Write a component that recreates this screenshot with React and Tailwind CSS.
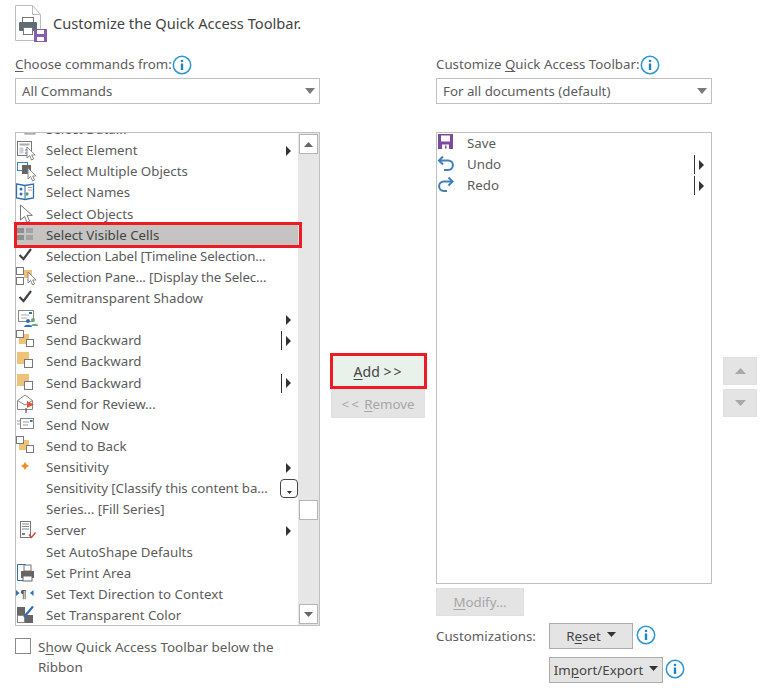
import React from "react";

const Tri = ({ dir = "down", color = "#7a7a7a", w = 10, h = 6 }) => (
  <svg width={w} height={h} viewBox="0 0 10 6" className="shrink-0" preserveAspectRatio="none">
    <path d={dir === "down" ? "M0 0H10L5 6Z" : "M0 6H10L5 0Z"} fill={color} />
  </svg>
);

const Info = ({ size = 20 }) => (
  <svg width={size} height={size} viewBox="0 0 20 20" className="shrink-0">
    <circle cx="10" cy="10" r="8.7" fill="none" stroke="#2b96d6" strokeWidth="1.5" />
    <circle cx="10" cy="6" r="1.3" fill="#1f86c6" />
    <rect x="8.8" y="8.5" width="2.4" height="6.5" fill="#1f86c6" />
  </svg>
);

const Cur = ({ x, y }) => (
  <path d={`M${x} ${y}v11l2.7-2.4 1.9 4.4 2-1-1.9-4h3.5z`} fill="#fff" stroke="#7d7d7d" strokeWidth="0.9" />
);

const Ico = ({ children }) => (
  <svg width="30" height="21" viewBox="0 0 30 21" className="shrink-0 overflow-visible">{children}</svg>
);

const Sq = ({ x, y, s = 7 }) => <rect x={x + 0.5} y={y + 0.5} width={s} height={s} fill="#fff" stroke="#777" />;

const icons = {
  data: (
    <Ico>
      <rect x="2" y="8" width="5" height="5" fill="#fff" stroke="#888" />
      <rect x="9" y="10" width="10" height="5" fill="#ddd" stroke="#888" />
    </Ico>
  ),
  element: (
    <Ico>
      <rect x="1.5" y="1.5" width="14" height="14" fill="#fff" stroke="#777" />
      <rect x="3.5" y="3.5" width="10" height="2" fill="#aaa" />
      <rect x="3.5" y="7.5" width="4" height="6" fill="#ccd" />
      <path d="M9 10h4M9 13h4" stroke="#2e75b6" />
      <Cur x={11} y={7} />
    </Ico>
  ),
  multi: (
    <Ico>
      <rect x="1.5" y="1.5" width="10" height="8" fill="#fff" stroke="#3b82c4" />
      <rect x="6" y="4" width="9" height="9" fill="#666" />
      <Cur x={12} y={7} />
    </Ico>
  ),
  names: (
    <Ico>
      <path d="M0.500 2l8.500 1.500 8.500-1.500v14l-8.500 1.500-8.500-1.500z" fill="#fff" stroke="#2e6fb0" strokeWidth="1.300" />
      <path d="M9 3.500V17" stroke="#2e6fb0" />
      <circle cx="5" cy="7" r="1.500" fill="#2e6fb0" />
      <circle cx="5" cy="12" r="1.500" fill="#2e6fb0" />
      <circle cx="11" cy="12" r="1.700" fill="#5a9c6d" />
      <path d="M12 5.500h4M12 8h4" stroke="#c98" />
    </Ico>
  ),
  objects: (
    <Ico>
      <path d="M4.500 1v15l4-3.600 2.600 6 2.600-1.200-2.700-5.800h5.300z" fill="#fff" stroke="#777" />
    </Ico>
  ),
  visible: (
    <Ico>
      <path d="M1 3h7v5H1zM1 10h7v5H1z" fill="#8f8f8f" />
      <path d="M10 3h7v5h-7zM10 10h7v5h-7z" fill="#a3a3a3" />
    </Ico>
  ),
  check: (
    <Ico>
      <path d="M3.500 9l4 4 7.500-10" fill="none" stroke="#444" strokeWidth="2.200" />
    </Ico>
  ),
  pane: (
    <Ico>
      <rect x="8" y="3" width="8" height="8" fill="#efc27a" />
      <Sq x={0} y={0} />
      <Sq x={0} y={10} />
      <Cur x={12} y={5} />
    </Ico>
  ),
  send: (
    <Ico>
      <rect x="2.500" y="1.500" width="15" height="11" fill="#fff" stroke="#888" />
      <path d="M5 6h8M5 9h6" stroke="#aaa" />
      <rect x="13" y="3" width="3" height="2" fill="#2e75b6" />
      <circle cx="12" cy="12" r="2" fill="#2e6fb0" />
      <path d="M8 18c0-3 8-3 8 0z" fill="#2e6fb0" />
      <circle cx="17" cy="11" r="2" fill="#6aa77d" />
      <path d="M15 17c1-3 7-3 7 0z" fill="#6aa77d" />
    </Ico>
  ),
  backA: (
    <Ico>
      <rect x="3" y="4" width="10" height="10" fill="#efc27a" />
      <Sq x={0} y={0} />
      <Sq x={10} y={9} />
    </Ico>
  ),
  backB: (
    <Ico>
      <rect x="1" y="1" width="12" height="12" fill="#efc27a" />
      <Sq x={8} y={8} s={8} />
    </Ico>
  ),
  review: (
    <Ico>
      <path d="M1.500 6.500L9 1l7.500 5.500v9h-15z" fill="#fff" stroke="#888" />
      <path d="M1.500 6.500L9 11l7.500-4.500" fill="none" stroke="#888" />
      <path d="M10 14v5" stroke="#555" strokeWidth="1.200" />
      <path d="M11 7l7 3.500-7 3.500z" fill="#e2553f" />
    </Ico>
  ),
  now: (
    <Ico>
      <rect x="4.500" y="3.500" width="13" height="10" fill="#fff" stroke="#888" />
      <path d="M1 6h3M1 9h3M7 7h6M7 10h5" stroke="#999" />
      <rect x="14" y="5" width="2.500" height="2" fill="#2e75b6" />
    </Ico>
  ),
  sens: (
    <Ico>
      <path d="M9 5l1.500 2.500L13 9l-2.500 1.500L9 13l-1.500-2.500L5 9l2.500-1.500z" fill="#f28a1e" />
    </Ico>
  ),
  server: (
    <Ico>
      <rect x="4.500" y="1.500" width="10" height="16" fill="#fff" stroke="#777" />
      <path d="M6 4h7M6 6.500h7M6 9h7" stroke="#888" />
      <path d="M6 14h3" stroke="#555" strokeWidth="1.500" />
      <path d="M13 14.500l2.500 3 4-5" fill="none" stroke="#d8452e" strokeWidth="1.400" />
    </Ico>
  ),
  print: (
    <Ico>
      <path d="M1.500 1.500h8l4 4v12h-12z" fill="#fff" stroke="#2e6fb0" />
      <rect x="8" y="2" width="7" height="6" fill="#fff" stroke="#777" />
      <rect x="5" y="8" width="13" height="7" fill="#666" />
      <rect x="7" y="13" width="9" height="5" fill="#fff" stroke="#666" />
    </Ico>
  ),
  dir: (
    <Ico>
      <path d="M0 6l3.500 3L0 12z" fill="#2e75b6" />
      <text x="4.500" y="13.500" fontSize="11" fontFamily="'Liberation Sans',sans-serif" fontWeight="700" fill="#555">¶</text>
      <path d="M17.500 6L14 9l3.500 3z" fill="#2e75b6" />
    </Ico>
  ),
  transparent: (
    <Ico>
      <rect x="1" y="2" width="8" height="8" fill="#666" />
      <rect x="9" y="10" width="8" height="8" fill="#666" />
      <rect x="1.500" y="10.500" width="7" height="7" fill="#fff" stroke="#888" />
      <path d="M8 12L17 1.500" stroke="#2e6fb0" strokeWidth="2.200" />
    </Ico>
  ),
  save: (
    <Ico>
      <path d="M1 1h15v15H1z" fill="#7c4a9e" />
      <rect x="4" y="2.500" width="9" height="6" fill="#fff" />
      <rect x="5" y="11.500" width="7" height="4.500" fill="#fff" />
      <rect x="8" y="12.500" width="1.500" height="3" fill="#7c4a9e" />
    </Ico>
  ),
  undo: (
    <Ico>
      <path d="M6 2.500L2 6.500l4 4" fill="none" stroke="#3f7fb8" strokeWidth="2" />
      <path d="M2.500 6.500H11c6.500 0 6.500 9.500 0 9.500H7" fill="none" stroke="#3f7fb8" strokeWidth="2" />
    </Ico>
  ),
  redo: (
    <Ico>
      <path d="M11.500 2.500l4 4-4 4" fill="none" stroke="#3f7fb8" strokeWidth="2" />
      <path d="M15 6.500H7c-6.500 0-6.500 9.500 0 9.500h3" fill="none" stroke="#3f7fb8" strokeWidth="2" />
    </Ico>
  ),
};

const Arrow = () => (
  <svg width="5" height="10" viewBox="0 0 5 10" className="shrink-0"><path d="M0 0l5 5-5 5z" fill="#333" /></svg>
);

const Trail = ({ kind }) => {
  if (kind === "arrow") return <span className="ml-auto mr-[7px] flex"><Arrow /></span>;
  if (kind === "split")
    return (
      <span className="ml-auto mr-[7px] flex items-center gap-[4px]">
        <span className="block w-[1.5px] h-[19px] bg-[#333]" />
        <Arrow />
      </span>
    );
  if (kind === "combo")
    return (
      <span className="ml-auto flex items-end justify-center w-[18px] h-[19px] border border-[#444] rounded-[4px] pb-[3px]">
        <svg width="5" height="3" viewBox="0 0 5 3"><path d="M0 0h5L2.500 3z" fill="#333" /></svg>
      </span>
    );
  return null;
};

const Row = ({ icon, label, trail, selected, tight }) => (
  <div className={`flex items-center h-[21.14px] ${selected ? "bg-[#c5c4c2] text-[#444]" : ""}`}>
    <span className="w-[30px] shrink-0 flex">{icon ? icons[icon] : null}</span>
    <span className={`whitespace-nowrap ${tight || ""}`}>{label}</span>
    <Trail kind={trail} />
  </div>
);

const commands = [
  ["data", "Select Data..."],
  ["element", "Select Element", "arrow"],
  ["multi", "Select Multiple Objects"],
  ["names", "Select Names"],
  ["objects", "Select Objects"],
  ["visible", "Select Visible Cells", null, true],
  ["check", "Selection Label [Timeline Selection...", null, false, "tracking-[-0.16px]"],
  ["pane", "Selection Pane... [Display the Selec...", null, false, "tracking-[-0.13px]"],
  ["check", "Semitransparent Shadow"],
  ["send", "Send", "arrow"],
  ["backA", "Send Backward", "split"],
  ["backB", "Send Backward"],
  ["backB", "Send Backward", "split"],
  ["review", "Send for Review..."],
  ["now", "Send Now"],
  ["backA", "Send to Back"],
  ["sens", "Sensitivity", "arrow"],
  [null, "Sensitivity [Classify this content ba...", "combo", false, "tracking-[-0.08px]"],
  [null, "Series... [Fill Series]"],
  ["server", "Server", "arrow"],
  [null, "Set AutoShape Defaults"],
  ["print", "Set Print Area"],
  ["dir", "Set Text Direction to Context"],
  ["transparent", "Set Transparent Color"],
];

const Select = ({ label, w }) => (
  <div className={`flex items-center justify-between h-[26px] ${w} border border-[#c0c0c0] pl-[6px] pr-[3px]`}>
    <span>{label}</span>
    <span className="mr-[1px]"><Tri w={10} h={6} /></span>
  </div>
);

const ScrollBtn = ({ dir }) => (
  <div className="flex items-center justify-center w-[19px] h-[20px] bg-white border border-[#b5b5b5]">
    <Tri dir={dir} color="#666" w={9} h={5} />
  </div>
);

const DisabledBtn = ({ className, children }) => (
  <div className={`flex items-center justify-center bg-[#e4e4e4] border border-[#e0e0e0] text-[#a6a6a6] ${className}`}>{children}</div>
);

const DropBtn = ({ className, children }) => (
  <div className={`flex items-center justify-center gap-[6px] h-[26px] bg-[#e4e4e4] border border-[#adadad] text-[#444] ${className}`}>
    <span>{children}</span>
    <span className="-mt-[3px] flex"><Tri color="#333" w={9} h={5} /></span>
  </div>
);

export default function App() {
  return (
    <div className="w-[768px] h-[694px] overflow-hidden bg-white text-[13.3px] leading-[21px] text-[#5c5c5c] font-['Noto_Sans','Open_Sans',sans-serif]">
      <div className="flex items-start h-[50px] pl-[15px] pt-[5px]">
        <svg width="33" height="37" viewBox="0 0 33 37" className="shrink-0">
          <path d="M0.500 0.500h17l8 9v26h-25z" fill="#fff" stroke="#bdbdbd" />
          <path d="M17.500 0.500v9h8" fill="none" stroke="#bdbdbd" />
          <rect x="7.500" y="12.500" width="11" height="5" fill="#fff" stroke="#777" />
          <rect x="4" y="17" width="18" height="9" rx="1" fill="#5f6b75" />
          <rect x="8.500" y="22.500" width="9" height="7" fill="#fff" stroke="#777" />
          <rect x="19" y="24" width="13" height="13" fill="#8a5cad" />
          <rect x="22" y="25" width="7" height="4" fill="#fff" />
          <rect x="22" y="32" width="7" height="4" fill="#fff" />
        </svg>
        <span className="ml-[5px] mt-[8px] text-[14.65px] text-[#444]">Customize the Quick Access Toolbar.</span>
      </div>

      <div className="flex items-start pl-[15px]">
        <div className="w-[305px] shrink-0">
          <div className="flex items-center h-[28px] pt-[1px]">
            <span><u className="underline-offset-2">C</u>hoose commands from:</span>
            <Info />
          </div>
          <Select label="All Commands" w="w-[305px]" />
          <div className="relative mt-[28px] w-[305px] h-[494px] border-[1.5px] border-[#c0c0c0]">
            <div className="flex h-full overflow-hidden">
              <div className="w-[282px] shrink-0 -mt-[14px]">
                {commands.map(([icon, label, trail, selected, tight], i) => (
                  <Row key={i} icon={icon} label={label} trail={trail} selected={selected} tight={tight} />
                ))}
              </div>
              <div className="relative flex-1 bg-[#e6e6e6] flex flex-col items-center justify-between py-[1px]">
                <ScrollBtn dir="up" />
                <div className="absolute top-[367px] left-[1px] w-[19px] h-[20px] bg-white border border-[#b5b5b5]" />
                <ScrollBtn dir="down" />
              </div>
            </div>
            <div className="absolute -left-[2px] top-[89px] w-[288px] h-[26px] border-[3px] border-[#ed1c24]" />
          </div>
          <div className="flex mt-[11px]">
            <span className="block w-[16px] h-[16px] shrink-0 border border-[#8a8a8a] mt-[1px]" />
            <span className="ml-[7px] w-[250px] text-[13.45px] leading-[20px]">S<u className="underline-offset-2">h</u>ow Quick Access Toolbar below the Ribbon</span>
          </div>
        </div>

        <div className="ml-[10px] w-[97px] shrink-0 mt-[303px]">
          <div className="flex items-center justify-center h-[36px] bg-[#e8f1ea] border-[3px] border-[#ed1c24] text-[#444] text-[14px]">
            <span><u className="underline-offset-2">A</u>dd <span className="tracking-[2px]">&gt;&gt;</span></span>
          </div>
          <DisabledBtn className="w-[94px] h-[29px] ml-[1px] pt-[2px]">
            <span><span className="tracking-[2px]">&lt;&lt;</span> <u className="underline-offset-2">R</u>emove</span>
          </DisabledBtn>
        </div>

        <div className="ml-[9px] w-[276px] shrink-0">
          <div className="flex items-center h-[28px] pt-[1px]">
            <span>Customize <u className="underline-offset-2">Q</u>uick Access Toolbar:</span>
            <Info />
          </div>
          <Select label="For all documents (default)" w="w-[276px]" />
          <div className="mt-[28px] h-[452px] border-[1.5px] border-[#c0c0c0]">
            <Row icon="save" label="Save" />
            <Row icon="undo" label="Undo" trail="split" />
            <Row icon="redo" label="Redo" trail="split" />
          </div>
          <DisabledBtn className="w-[88px] h-[28px] mt-[4px]">
            <span><u className="underline-offset-2">M</u>odify...</span>
          </DisabledBtn>
          <div className="flex items-center mt-[7px]">
            <span className="w-[113px] shrink-0 pt-[1px]">Customizations:</span>
            <DropBtn className="w-[84px]">R<u className="underline-offset-2">e</u>set</DropBtn>
            <span className="ml-[3px] -mt-[2px]"><Info /></span>
          </div>
          <div className="flex items-center mt-[8px] pl-[113px]">
            <DropBtn className="w-[114px]">Im<u className="underline-offset-2">p</u>ort/Export</DropBtn>
            <span className="ml-[2px] -mt-[2px]"><Info /></span>
          </div>
        </div>

        <div className="ml-[11px] w-[34px] shrink-0 mt-[307px] flex flex-col gap-[4px]">
          <DisabledBtn className="h-[28px]"><Tri dir="up" color="#a8a8a8" w={11} h={6} /></DisabledBtn>
          <DisabledBtn className="h-[28px]"><Tri color="#a8a8a8" w={11} h={6} /></DisabledBtn>
        </div>
      </div>
    </div>
  );
}
